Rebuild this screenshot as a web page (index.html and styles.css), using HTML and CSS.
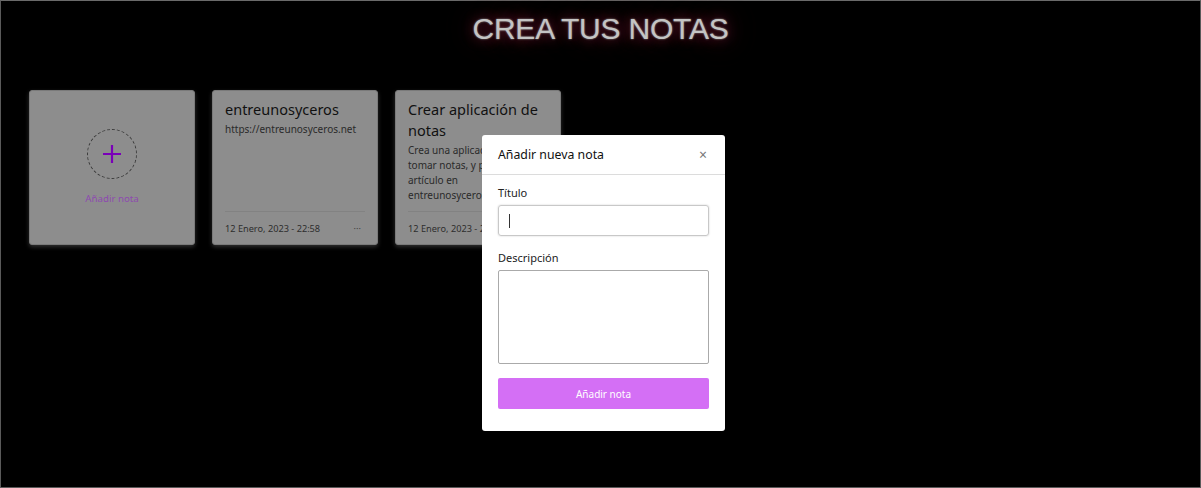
FILE: index.html
```html
<!DOCTYPE html>
<html lang="es">
<head>
    <meta charset="UTF-8">
    <meta name="viewport" content="width=device-width, initial-scale=1.0">
    <title>Crea tus notas</title>
    <link rel="stylesheet" href="styles.css">
</head>
<body>
    <div class="page">
        <h1 class="neon">CREA TUS NOTAS</h1>

        <div class="notes">
            <div class="note add-note">
                <div class="add-circle">
                    <svg width="22" height="22" viewBox="0 0 22 22">
                        <path d="M11 2 V20 M2 11 H20" stroke="#7a00b8" stroke-width="2.2" fill="none"/>
                    </svg>
                </div>
                <span class="add-label">Añadir nota</span>
            </div>

            <div class="note">
                <div class="note-body">
                    <h3>entreunosyceros</h3>
                    <p>https://entreunosyceros.net</p>
                </div>
                <div class="note-footer">
                    <span>12 Enero, 2023 - 22:58</span>
                    <span class="dots">···</span>
                </div>
            </div>

            <div class="note">
                <div class="note-body">
                    <h3>Crear aplicación de notas</h3>
                    <p>Crea una aplicación para tomar notas, y publicar un artículo en entreunosyceros.net</p>
                </div>
                <div class="note-footer">
                    <span>12 Enero, 2023 - 22:58</span>
                    <span class="dots">···</span>
                </div>
            </div>
        </div>
    </div>

    <div class="modal">
        <div class="modal-header">
            <span class="modal-title">Añadir nueva nota</span>
            <span class="close">&times;</span>
        </div>
        <div class="modal-body">
            <label>Título</label>
            <div class="field"><span class="caret"></span></div>
            <label class="second">Descripción</label>
            <div class="area"></div>
            <button type="button">Añadir nota</button>
        </div>
    </div>
</body>
</html>
```

FILE: styles.css
```css
body {
    margin: 0;
    background-color: #000;
    font-family: "Noto Sans", sans-serif;
}
.page {
    height: 486px;
    border: 1px solid #5a5a5a;
    border-top-color: #6a6a6a;
    background-color: #000;
}
.neon {
    margin: 11px 0 0 0;
    text-align: center;
    font-family: "Liberation Sans", Arial, sans-serif;
    font-weight: normal;
    font-size: 30px;
    letter-spacing: -0.2px;
    color: #c4c4c4;
    text-shadow: 0 0 2px #999, 0 0 12px #6a1a30, 0 0 24px #5a1028, 0 0 40px #400818;
}
.notes {
    display: flex;
    gap: 17px;
    margin: 44px 0 0 28px;
}
.note {
    width: 164px;
    height: 153px;
    background-color: #8d8d8d;
    border: 1px solid #7a7a7a;
    border-radius: 3px;
    box-shadow: 0 2px 4px rgba(60,60,60,0.8);
    display: flex;
    flex-direction: column;
    padding: 0;
}
.add-note {
    align-items: center;
    justify-content: flex-start;
}
.add-circle {
    width: 48px;
    height: 48px;
    margin-top: 38px;
    border: 1.5px dashed #3a3a3a;
    border-radius: 50%;
    display: flex;
    align-items: center;
    justify-content: center;
}
.add-label {
    margin-top: 13px;
    font-size: 9.7px;
    color: #8e4ab0;
}
.note-body {
    flex: 1;
    padding: 8px 12px 0 12px;
    overflow: hidden;
}
.note-body h3 {
    margin: 0;
    font-size: 14.5px;
    font-weight: normal;
    line-height: 21px;
    color: #111;
}
.note-body p {
    margin: 2px 0 0 0;
    font-size: 10px;
    line-height: 15px;
    color: #2a2a2a;
}
.note-footer {
    margin: 0 12px;
    border-top: 1px solid #828282;
    height: 32px;
    display: flex;
    justify-content: space-between;
    align-items: center;
    font-size: 9.2px;
    color: #2e2e2e;
}
.dots {
    color: #444;
    margin-right: 4px;
}
.modal {
    position: fixed;
    left: 482px;
    top: 135px;
    width: 243px;
    height: 296px;
    background-color: #fff;
    border-radius: 3px;
}
.modal-header {
    height: 40px;
    border-bottom: 1px solid #dcdcdc;
    display: flex;
    justify-content: space-between;
    align-items: center;
    padding: 0 16px;
    box-sizing: border-box;
}
.modal-title {
    font-size: 12.3px;
    color: #111;
}
.close {
    font-size: 14px;
    color: #777;
    margin-right: 2px;
}
.modal-body {
    padding: 10px 16px;
    display: flex;
    flex-direction: column;
}
label {
    font-size: 11px;
    color: #222;
    line-height: 16px;
}
.second {
    margin-top: 14px;
}
.field {
    margin-top: 4px;
    height: 31px;
    border: 1px solid #c8c8c8;
    border-radius: 3px;
    box-shadow: 0 0 2px rgba(0,0,0,0.2);
    display: flex;
    align-items: center;
    padding-left: 10px;
    box-sizing: border-box;
}
.caret {
    width: 1px;
    height: 14px;
    background-color: #333;
}
.area {
    margin-top: 4px;
    height: 94px;
    border: 1px solid #aaa;
    border-radius: 2px;
    box-sizing: border-box;
}
button {
    margin-top: 14px;
    height: 31px;
    border: none;
    border-radius: 2px;
    background-color: #d46ff5;
    color: #fff;
    font-family: "Noto Sans", sans-serif;
    font-size: 10px;
}
```
